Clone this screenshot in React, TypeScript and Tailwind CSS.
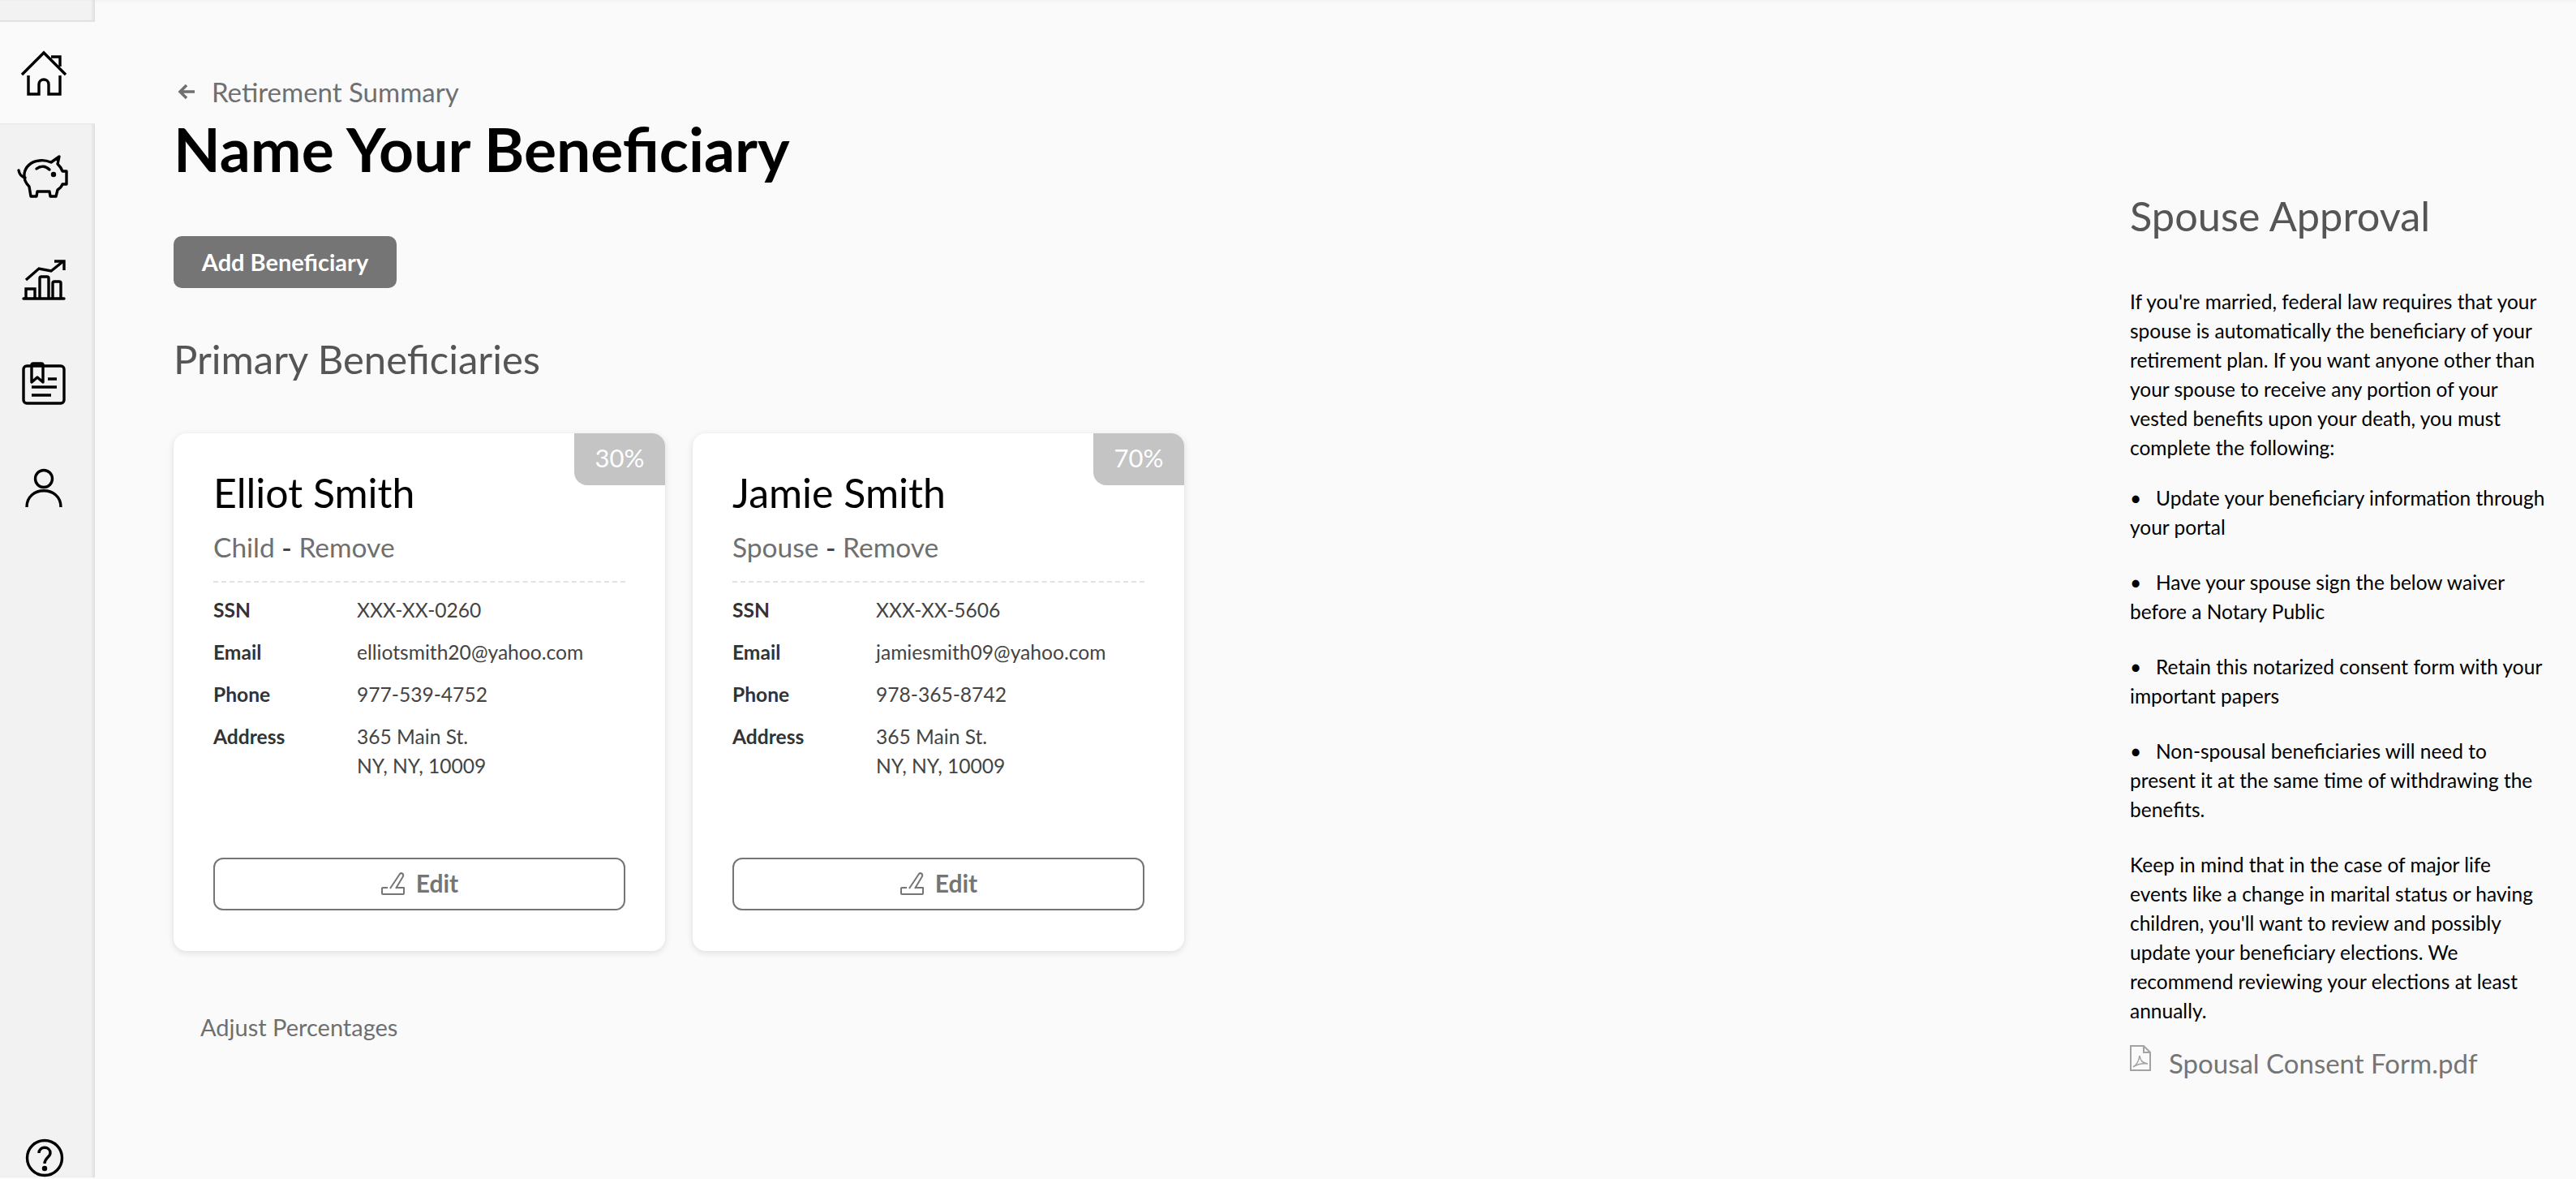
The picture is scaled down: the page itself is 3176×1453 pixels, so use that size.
const navIcon = 'w-[80px] h-[80px] text-black'

function HomeIcon() {
  return (
    <svg viewBox="0 0 80 80" fill="none" stroke="currentColor" strokeWidth="3.4" className={navIcon}>
      <path d="M14 42 41 15l27 27" />
      <path d="M50 20h11v12" />
      <path d="M22 43v23h13V54c0-8 12-8 12 0v12h14V43" />
    </svg>
  )
}

function PigIcon() {
  return (
    <svg viewBox="0 0 80 80" fill="none" stroke="currentColor" strokeWidth="3.4" strokeLinejoin="round" strokeLinecap="round" className={navIcon}>
      <path d="M10 33c1 5 4 8 8 9" />
      <path d="M60 16 50 23c-5-2-10-3-15-2-10 1-17 8-18 16-1 7 2 12 6 16l2 12h7l1-6h15l1 6h7l2-8c3-2 5-4 6-7h5V34h-5c-1-3-3-6-6-9z" />
      <path d="M32 31c5-4 11-4 16 1" />
      <circle cx="53" cy="38" r="1.5" />
    </svg>
  )
}

function ChartIcon() {
  return (
    <svg viewBox="0 0 80 80" fill="none" stroke="currentColor" strokeWidth="3.4" className={navIcon}>
      <path d="M16 63h50" strokeLinecap="round" />
      <path d="M19 63V51h11v12M36 63V38q0-2 2-2h7q2 0 2 2v25M52 63V44q0-2 2-2h6q2 0 2 2v19" />
      <path d="M19 40 35 26l15 3 15-12" />
      <path d="M54 17h12v11" />
    </svg>
  )
}

function NewsIcon() {
  return (
    <svg viewBox="0 0 80 80" fill="none" stroke="currentColor" strokeWidth="3.4" strokeLinejoin="round" className={navIcon}>
      <rect x="16" y="18" width="50" height="46" rx="4" />
      <path d="M26 38V17q0-2 2-2h10q2 0 2 2v21l-7-6z" />
      <path d="M46 34h11M26 44h31M26 54h24" />
    </svg>
  )
}

function UserIcon() {
  return (
    <svg viewBox="0 0 80 80" fill="none" stroke="currentColor" strokeWidth="3.4" className={navIcon}>
      <circle cx="41" cy="29" r="10.5" />
      <path d="M20 64c0-27 42-27 42 0" />
    </svg>
  )
}

function HelpIcon() {
  return (
    <svg viewBox="0 0 48 48" fill="none" stroke="currentColor" strokeWidth="3.4" className="w-[48px] h-[48px] text-black">
      <circle cx="24" cy="24" r="21.5" />
      <path d="M17 18c0-9 14-9 14 0 0 5-7 6-7 13" />
      <circle cx="24" cy="37" r="1.5" />
    </svg>
  )
}

function EditIcon() {
  return (
    <svg viewBox="8 3 31 30" fill="none" stroke="currentColor" strokeWidth="2" strokeLinejoin="round" className="w-[31px] h-[30px]">
      <path d="M20 24 32 6c2-2 5 0 4 3L27 24" />
      <path d="M17 23h-6q-1 0-1 1v6q0 1 1 1h25q1 0 1-1v-7H27" />
    </svg>
  )
}

function PdfIcon() {
  return (
    <svg viewBox="0 0 26 32" fill="none" stroke="#a3a3a3" strokeWidth="2" className="w-[26px] h-[32px]">
      <path d="M1 1h16l8 8v22H1z" />
      <path d="M17 1v8h8" />
      <path d="M4 27c5-3 7-8 8-14 1 6 3 9 10 10-7-1-12 0-18 4z" strokeWidth="1.5" />
    </svg>
  )
}

const people = [
  { name: 'Elliot Smith', pct: '30%', rel: 'Child', ssn: 'XXX-XX-0260', email: 'elliotsmith20@yahoo.com', phone: '977-539-4752' },
  { name: 'Jamie Smith', pct: '70%', rel: 'Spouse', ssn: 'XXX-XX-5606', email: 'jamiesmith09@yahoo.com', phone: '978-365-8742' },
]

function Row({ label, children }: { label: string; children: React.ReactNode }) {
  return (
    <div className="flex text-[24.6px] leading-[36px] text-[#444]">
      <div className="w-[177px] font-bold text-[#333]">{label}</div>
      <div>{children}</div>
    </div>
  )
}

function Card({ p }: { p: (typeof people)[number] }) {
  return (
    <div className="relative w-[606px] h-[638px] bg-white rounded-[16px] shadow-[0_2px_8px_rgba(0,0,0,0.12)] px-[49px] pt-[42px]">
      <div className="absolute top-0 right-0 w-[112px] h-[64px] bg-[#c4c4c4] rounded-tr-[16px] rounded-bl-[16px] flex items-center justify-center pb-[4px] text-white text-[31px]">
        {p.pct}
      </div>
      <div className="text-[50px] leading-[62px] text-black">{p.name}</div>
      <div className="mt-[14px] text-[33.5px] leading-[44px] text-[#6f6f6f] pb-[20px] border-b-2 border-dashed border-[#e2e2e2]">
        {p.rel} <span className="font-semibold text-[#444]">-</span> Remove
      </div>
      <div className="mt-[16px] flex flex-col gap-[16px]">
        <Row label="SSN">{p.ssn}</Row>
        <Row label="Email">{p.email}</Row>
        <Row label="Phone">{p.phone}</Row>
        <Row label="Address">
          365 Main St.
          <br />
          NY, NY, 10009
        </Row>
      </div>
      <button className="absolute left-[49px] right-[49px] bottom-[50px] h-[65px] rounded-[12px] border-2 border-[#757575] flex items-center justify-center gap-[13px] pb-[2px] text-[30px] font-bold text-[#757575]">
        <EditIcon />
        Edit
      </button>
    </div>
  )
}

const bullets = [
  ['Update your beneficiary information through', 'your portal'],
  ['Have your spouse sign the below waiver', 'before a Notary Public'],
  ['Retain this notarized consent form with your', 'important papers'],
  ['Non-spousal beneficiaries will need to', 'present it at the same time of withdrawing the', 'benefits.'],
]

const intro = [
  "If you're married, federal law requires that your",
  'spouse is automatically the beneficiary of your',
  'retirement plan. If you want anyone other than',
  'your spouse to receive any portion of your',
  'vested benefits upon your death, you must',
  'complete the following:',
]

const outro = [
  'Keep in mind that in the case of major life',
  'events like a change in marital status or having',
  "children, you'll want to review and possibly",
  'update your beneficiary elections. We',
  'recommend reviewing your elections at least',
  'annually.',
]

export default function App() {
  return (
    <div className="flex h-[1453px] w-[3176px] overflow-hidden bg-[#fafafa] font-['Lato',sans-serif]">
      <aside className="w-[117px] shrink-0 flex flex-col pb-[2px]">
        {/* top strip */}
        <div className="h-[27px] bg-[#f2f2f2] border-b-2 border-[#e2e2e2] shadow-[inset_-4px_0_4px_-2px_rgba(0,0,0,0.1)]" />
        <div className="h-[125px] bg-[#fafafa] flex items-center pl-[13px]">
          <HomeIcon />
        </div>
        <div className="flex-1 flex flex-col bg-[#f2f2f2] border-t border-[#e8e8e8] shadow-[inset_-4px_0_4px_-2px_rgba(0,0,0,0.1)] pl-[13px]">
          <div className="h-[128px] flex items-center"><PigIcon /></div>
          <div className="h-[128px] flex items-center"><ChartIcon /></div>
          <div className="h-[128px] flex items-center"><NewsIcon /></div>
          <div className="h-[128px] flex items-center"><UserIcon /></div>
          <div className="mt-auto pl-[18px]">
            <HelpIcon />
          </div>
        </div>
      </aside>

      <div className="flex-1 flex shadow-[inset_0_4px_4px_-2px_rgba(0,0,0,0.04)]">
        <main className="flex-1 pl-[97px] pt-[92px]">
          <div className="flex items-center gap-[18px] text-[33px] leading-[42px] text-[#6f6f6f]">
            <svg viewBox="0 0 24 24" fill="none" stroke="currentColor" strokeWidth="3.5" className="w-[24px] h-[24px] ml-[5px]">
              <path d="M21 12H4M11 4l-8 8 8 8" />
            </svg>
            Retirement Summary
          </div>
          <h1 className="mt-[4px] text-[75px] leading-[90px] font-bold text-black">Name Your Beneficiary</h1>
          <button className="mt-[63px] block w-[275px] h-[64px] rounded-[10px] bg-[#757575] text-white text-[29px] font-bold">
            Add Beneficiary
          </button>
          <h2 className="mt-[56px] text-[49px] leading-[62px] text-[#555]">Primary Beneficiaries</h2>
          <div className="mt-[61px] flex gap-[34px]">
            {people.map((p) => (
              <Card key={p.name} p={p} />
            ))}
          </div>
          <div className="mt-[74px] ml-[33px] text-[29px] leading-[40px] text-[#6f6f6f]">Adjust Percentages</div>
        </main>

        <aside className="w-[550px] shrink-0 pt-[236px] text-[24.5px] leading-[36px] text-black">
          <h3 className="text-[50.5px] leading-[60px] text-[#555]">Spouse Approval</h3>
          <div className="mt-[58px]">
            {intro.map((l) => (
              <div key={l}>{l}</div>
            ))}
          </div>
          <div className="mt-[26px] flex flex-col gap-[32px]">
            {bullets.map((lines) => (
              <div key={lines[0]}>
                {lines.map((l, i) => (
                  <div key={l} className={i === 0 ? 'whitespace-nowrap' : ''}>
                    {i === 0 && <span className="inline-block w-[32px]">•</span>}
                    {l}
                  </div>
                ))}
              </div>
            ))}
          </div>
          <div className="mt-[32px]">
            {outro.map((l) => (
              <div key={l}>{l}</div>
            ))}
          </div>
          <div className="mt-[24px] flex items-start gap-[22px] text-[33px] leading-[44px] text-[#757575]">
            <PdfIcon />
            Spousal Consent Form.pdf
          </div>
        </aside>
      </div>
    </div>
  )
}
